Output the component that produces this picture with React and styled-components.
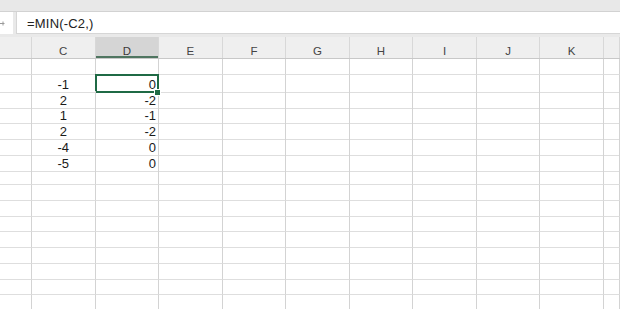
import React from 'react'
import styled, { createGlobalStyle } from 'styled-components'

const COL_W = 63.56
const ROW_H = 15.75
const COLUMNS = ['C', 'D', 'E', 'F', 'G', 'H', 'I', 'J', 'K']

const cValues = ['', '-1', '2', '1', '2', '-4', '-5']
const dValues = ['', '0', '-2', '-1', '-2', '0', '0']

const GlobalStyle = createGlobalStyle`
  html, body { margin:0; padding:0; background:#fff; overflow:hidden; }
  body { font-family:"Liberation Sans", Arial, sans-serif; }
`

const Sheet = styled.div`
  width:620px; height:309px; overflow:hidden; display:flex; flex-direction:column;
`
const RibbonEdge = styled.div`
  height:11px; background:#e8e8e8; border-bottom:1px solid #d2d2d2; flex:none;
`
const FormulaBar = styled.div`
  height:25px; flex:none; display:flex; gap:3px; background:#e9e9e9; padding-bottom:3px;
  box-sizing:border-box;
`
const NameStub = styled.div`
  width:13px; background:#fff; display:flex; align-items:center;
`
const FormulaInput = styled.div`
  flex:1; background:#fff; border-left:1px solid #d6d6d6; border-bottom:1px solid #d6d6d6;
  display:flex; align-items:center; padding-left:10px; padding-top:1px;
  font-size:13px; color:#222; letter-spacing:0.2px;
`
const HeaderRow = styled.div`
  height:22px; flex:none; display:grid;
  grid-template-columns:32px repeat(${COLUMNS.length}, ${COL_W}px) 1fr;
  background:#efefef; border-bottom:1px solid #c8c8c8; box-sizing:border-box;
`
const HeaderCell = styled.div`
  border-right:1px solid #d8d8d8; box-sizing:border-box;
  display:flex; align-items:flex-end; justify-content:center; padding-bottom:1px;
  font-size:11.5px; color:#444;
  ${p => p.$active && `
    background:#d5d5d5; color:#3a3a3a;
    box-shadow:inset 0 -2px 0 #4f7560;
  `}
`
const Row = styled.div`
  height:${ROW_H}px; flex:none; display:grid;
  grid-template-columns:32px repeat(${COLUMNS.length}, ${COL_W}px) 1fr;
`
const Cell = styled.div`
  position:relative; box-sizing:border-box;
  border-right:1px solid #d3d3d3; border-bottom:1px solid #dedede;
  font-size:13px; line-height:15px; color:#1a1a1a; padding:2px 2px 0;
  text-align:${p => p.$align || 'left'};
  white-space:nowrap;
  ${p => p.$selected && `
    &::after {
      content:''; position:absolute; left:-1px; top:-1px; right:-1px; bottom:-1px;
      border:2px solid #1f6a45; pointer-events:none;
    }
  `}
`
const FillHandle = styled.span`
  position:absolute; right:-3px; bottom:-4px; width:5px; height:5px;
  background:#1f6a45; border:1px solid #fff; z-index:2;
`

const StubGlyph = () => (
  <svg width="8" height="10" viewBox="0 0 8 10">
    <path d="M0 5.5H4.5M3 3.5V7.5" stroke="#9a9a9a" strokeWidth="1" fill="none" />
  </svg>
)

export default function App() {
  const rows = Array.from({ length: 17 }, (_, i) => i)
  return (
    <>
      <GlobalStyle />
      <Sheet>
        <RibbonEdge />
        <FormulaBar>
          <NameStub><StubGlyph /></NameStub>
          <FormulaInput>=MIN(-C2,)</FormulaInput>
        </FormulaBar>
        <HeaderRow>
          <HeaderCell />
          {COLUMNS.map(c => (
            <HeaderCell key={c} $active={c === 'D'}>{c}</HeaderCell>
          ))}
          <HeaderCell />
        </HeaderRow>
        {rows.map(r => (
          <Row key={r}>
            <Cell />
            <Cell $align="center">{cValues[r] || ''}</Cell>
            <Cell $align="right" $selected={r === 1}>
              {dValues[r] || ''}
              {r === 1 && <FillHandle />}
            </Cell>
            {COLUMNS.slice(2).map(c => <Cell key={c} />)}
            <Cell />
          </Row>
        ))}
      </Sheet>
    </>
  )
}
